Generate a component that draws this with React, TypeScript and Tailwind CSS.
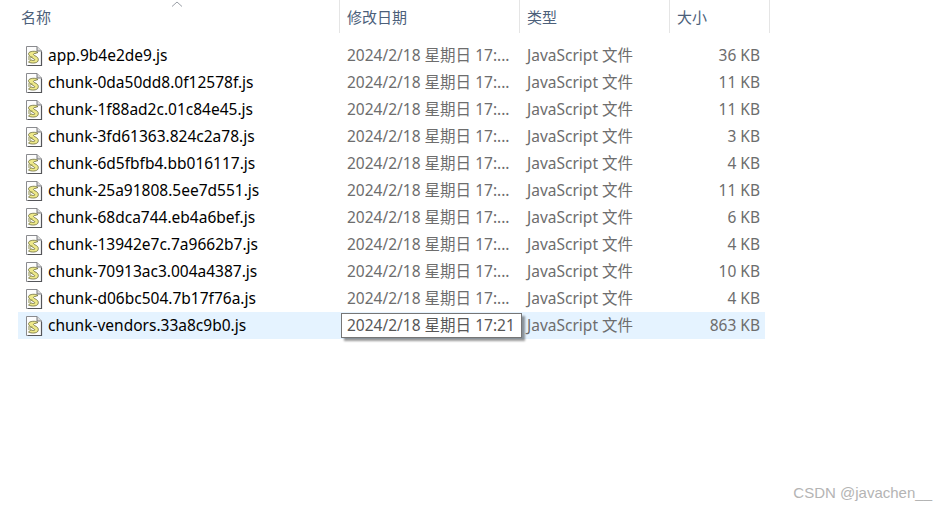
const files = [
  { name: "app.9b4e2de9.js", size: "36 KB" },
  { name: "chunk-0da50dd8.0f12578f.js", size: "11 KB" },
  { name: "chunk-1f88ad2c.01c84e45.js", size: "11 KB" },
  { name: "chunk-3fd61363.824c2a78.js", size: "3 KB" },
  { name: "chunk-6d5fbfb4.bb016117.js", size: "4 KB" },
  { name: "chunk-25a91808.5ee7d551.js", size: "11 KB" },
  { name: "chunk-68dca744.eb4a6bef.js", size: "6 KB" },
  { name: "chunk-13942e7c.7a9662b7.js", size: "4 KB" },
  { name: "chunk-70913ac3.004a4387.js", size: "10 KB" },
  { name: "chunk-d06bc504.7b17f76a.js", size: "4 KB" },
  { name: "chunk-vendors.33a8c9b0.js", size: "863 KB" },
];

const font = "font-['Noto_Sans','Noto_Sans_CJK_SC',sans-serif]";

function ScriptIcon() {
  return (
    <svg width="18" height="20" viewBox="0 0 18 20" className="shrink-0">
      <path d="M1.5 0.5H12L16.5 5V19.5H1.5Z" fill="#fdfdfd" stroke="#8a8b8f" />
      <path d="M12 0.5V5H16.5" fill="#dcdcdc" stroke="#77787c" />
      <path d="M16.5 6V19.5H3" fill="none" stroke="#55565a" strokeWidth="1.2" />
      <path d="M3.5 7.5C4 5 11 4.5 13 6.5L10 7.5C8 7.5 8 9 10 9.8C12.5 11 14 12.5 13 15C12 17.5 6 17.5 3.5 16L6 13.8C7.5 14.8 9.8 14.8 9.8 13.8C9.8 12.8 3.5 11 3.5 7.5Z" fill="#eee98a" stroke="#6a6a3a" strokeWidth="0.8" />
      <path d="M3 11H7.5M3 13H6" stroke="#8f8f4a" strokeWidth="1" />
    </svg>
  );
}

function HeaderCell({ label, className }: { label: string; className: string }) {
  return (
    <div className={`h-[33px] border-r border-[#e5e5e5] pl-[7px] pt-[5px] text-[15px] leading-[24px] text-[#4c607a] ${className}`}>
      {label}
    </div>
  );
}

export default function App() {
  return (
    <div className={`relative h-[510px] w-[947px] overflow-hidden bg-white ${font}`}>
      {/* Column headers */}
      <div className="flex">
        <div className="h-[33px] w-[340px] border-r border-[#e5e5e5] pl-[21px] pt-[5px] text-[15px] leading-[24px] text-[#4c607a]">
          名称
        </div>
        <HeaderCell label="修改日期" className="w-[180px]" />
        <HeaderCell label="类型" className="w-[150px]" />
        <HeaderCell label="大小" className="w-[100px]" />
      </div>
      <svg width="12" height="6" viewBox="0 0 12 6" className="absolute left-[171px] top-[1px]">
        <path d="M1 5.5L6 1L11 5.5" fill="none" stroke="#9a9fa6" />
      </svg>

      {/* File rows */}
      <div className="ml-[18px] mt-[9px] w-[747px]">
        {files.map((file, i) => {
          const selected = i === files.length - 1;
          return (
            <div key={file.name} className={`flex h-[27px] items-center text-[15.5px] leading-[25px] ${selected ? "bg-[#e5f3ff]" : ""}`}>
              <div className="flex w-[321px] items-center gap-[5px] pl-[7px] text-black">
                <ScriptIcon />
                <span className="whitespace-nowrap">{file.name}</span>
              </div>
              {/* the tooltip covers this cell on the selected row */}
              <div className="w-[180px] pl-[8px] whitespace-nowrap text-[#6d6d6d]">{selected ? "" : "2024/2/18 星期日 17:..."}</div>
              <div className="w-[140px] pl-[8px] whitespace-nowrap text-[#6d6d6d]">JavaScript 文件</div>
              <div className="w-[101px] text-right whitespace-nowrap text-[#6d6d6d]">{file.size}</div>
            </div>
          );
        })}
      </div>

      {/* Tooltip over the selected row */}
      <div className="absolute left-[341px] top-[313px] flex h-[25px] w-[181px] items-center whitespace-nowrap border border-[#767676] bg-white pl-[5px] text-[15.5px] text-[#575757] shadow-[3px_3px_2px_rgba(0,0,0,0.4)]">
        2024/2/18 星期日 17:21
      </div>

      <div className="absolute right-[15px] top-[484px] font-['Liberation_Sans',sans-serif] text-[15px] leading-[18px] text-[#b4b4b4]">
        CSDN @javachen__
      </div>
    </div>
  );
}
